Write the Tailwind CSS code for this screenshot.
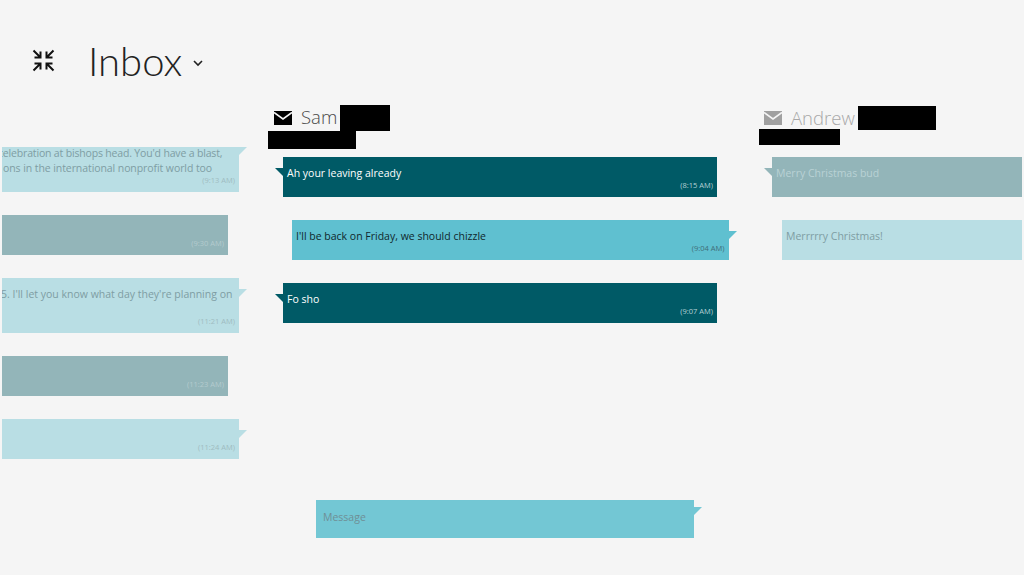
<!DOCTYPE html>
<html lang="en">
<head>
  <meta charset="UTF-8" />
  <title>Inbox</title>
  <script src="https://cdn.jsdelivr.net/npm/@tailwindcss/browser@4"></script>
</head>
<body class="bg-[#f5f5f5] font-['Open_Sans','Noto_Sans',sans-serif]">
<div class="w-[1024px] h-[575px] overflow-hidden bg-[#f5f5f5]">

  <!-- Header -->
  <header class="h-[105px] flex items-start pt-[37px] pl-[32px]">
    <svg class="w-[23px] h-[23px] mt-[12px]" viewBox="0 0 23 23" fill="none" stroke="#111" stroke-width="2">
      <path d="M1.5 1.5L8 8M8.5 2.5v6H2.5M21.5 1.5L15 8M14.5 2.5v6h6M1.5 21.5L8 15M8.5 20.5v-6H2.5M21.5 21.5L15 15M14.5 20.5v-6h6" />
    </svg>
    <h1 class="ml-[33px] -mt-[1px] font-['Lato',sans-serif] text-[40px] leading-[50px] font-light text-[#222]">Inbox</h1>
    <svg class="w-[10px] h-[7px] ml-[11px] mt-[23px]" viewBox="0 0 10 7" fill="none" stroke="#222" stroke-width="1.6">
      <path d="M1 1l4 4 4-4" />
    </svg>
  </header>

  <main class="h-[395px] flex items-start">
    <!-- Left conversation -->
    <section class="w-[246px] ml-[2px] pt-[42px] flex flex-col gap-[23px]">
      <div class="relative w-[237px] h-[45px] bg-[#b9dee4]">
        <div class="overflow-hidden h-[45px] text-[10.5px] leading-[14.5px] text-[#7e9da3] whitespace-nowrap">
          <p class="-ml-[4px] -mt-[1px] tracking-[-0.17px]">celebration at bishops head. You'd have a blast,</p>
          <p class="ml-[1px] tracking-[-0.08px]">ons in the international nonprofit world too</p>
        </div>
        <span class="absolute right-[4px] bottom-[7px] text-[7.5px] leading-[10px] text-[#9fbcc1]">(9:13 AM)</span>
        <svg class="absolute left-full top-0 w-[8px] h-[8px]" viewBox="0 0 8 8" fill="#b9dee4"><path d="M0 0h8L0 8z" /></svg>
      </div>
      <div class="relative w-[226px] h-[40px] bg-[#93b5b9]">
        <span class="absolute right-[4px] bottom-[7px] text-[7.5px] leading-[10px] text-[#b3cbce]">(9:30 AM)</span>
      </div>
      <div class="relative w-[237px] h-[55px] bg-[#b9dee4]">
        <div class="overflow-hidden pt-[8px] text-[10.5px] leading-[16px] text-[#7e9da3] whitespace-nowrap">
          <p class="-ml-[1px]">5. I'll let you know what day they're planning on</p>
        </div>
        <span class="absolute right-[4px] bottom-[7px] text-[7.5px] leading-[10px] text-[#9fbcc1]">(11:21 AM)</span>
        <svg class="absolute left-full top-[11px] w-[8px] h-[8px]" viewBox="0 0 8 8" fill="#b9dee4"><path d="M0 0h8L0 8z" /></svg>
      </div>
      <div class="relative w-[226px] h-[40px] bg-[#93b5b9]">
        <span class="absolute right-[4px] bottom-[7px] text-[7.5px] leading-[10px] text-[#b3cbce]">(11:23 AM)</span>
      </div>
      <div class="relative w-[237px] h-[40px] bg-[#b9dee4]">
        <span class="absolute right-[4px] bottom-[7px] text-[7.5px] leading-[10px] text-[#9fbcc1]">(11:24 AM)</span>
        <svg class="absolute left-full top-[11px] w-[8px] h-[8px]" viewBox="0 0 8 8" fill="#b9dee4"><path d="M0 0h8L0 8z" /></svg>
      </div>
    </section>

    <!-- Sam -->
    <section class="w-[468px] ml-[20px]">
      <div class="h-[52px]">
        <div class="flex items-start h-[26px]">
          <svg class="w-[18px] h-[14px] ml-[6px] mt-[6px]" viewBox="0 0 18 14">
            <path fill="#000" d="M0 0h18v14H0z" />
            <path fill="none" stroke="#f5f5f5" stroke-width="1.6" d="M0 1.5l9 6.5 9-6.5" />
          </svg>
          <span class="ml-[9px] w-[39px] text-[18.5px] leading-[24px] font-light text-[#4a4a4a]">Sam</span>
          <div class="w-[50px] h-[26px] bg-black"></div>
        </div>
        <div class="w-[88px] h-[18px] bg-black"></div>
      </div>
      <div class="flex flex-col gap-[23px]">
        <div class="relative ml-[15px] w-[434px] h-[40px] bg-[#005a66] text-white">
          <p class="pl-[4px] pt-[8px] text-[10.5px] leading-[16px]">Ah your leaving already</p>
          <span class="absolute right-[4px] bottom-[7px] text-[7.5px] leading-[10px] text-[#b5d0d4]">(8:15 AM)</span>
          <svg class="absolute right-full top-[11px] w-[8px] h-[8px]" viewBox="0 0 8 8" fill="#005a66"><path d="M0 0h8v8z" /></svg>
        </div>
        <div class="relative ml-[24px] w-[436.5px] h-[40px] bg-[#5fc0d0] text-[#10282c]">
          <p class="pl-[4px] pt-[8px] text-[10.5px] leading-[16px]">I'll be back on Friday, we should chizzle</p>
          <span class="absolute right-[4px] bottom-[7px] text-[7.5px] leading-[10px] text-[#3f6f78]">(9:04 AM)</span>
          <svg class="absolute left-full top-[11px] w-[8px] h-[8px]" viewBox="0 0 8 8" fill="#5fc0d0"><path d="M0 0h8L0 8z" /></svg>
        </div>
        <div class="relative ml-[15px] w-[434px] h-[40px] bg-[#005a66] text-white">
          <p class="pl-[4px] pt-[8px] text-[10.5px] leading-[16px]">Fo sho</p>
          <span class="absolute right-[4px] bottom-[7px] text-[7.5px] leading-[10px] text-[#b5d0d4]">(9:07 AM)</span>
          <svg class="absolute right-full top-[11px] w-[8px] h-[8px]" viewBox="0 0 8 8" fill="#005a66"><path d="M0 0h8v8z" /></svg>
        </div>
      </div>
    </section>

    <!-- Andrew -->
    <section class="w-[265px] ml-[23px]">
      <div class="h-[52px] pt-[1px]">
        <div class="flex items-start h-[23px]">
          <svg class="w-[18px] h-[14px] ml-[5px] mt-[5px]" viewBox="0 0 18 14">
            <path fill="#a0a0a0" d="M0 0h18v14H0z" />
            <path fill="none" stroke="#f5f5f5" stroke-width="1.6" d="M0 1.5l9 6.5 9-6.5" />
          </svg>
          <span class="ml-[9px] w-[67px] text-[18.5px] leading-[23px] font-light text-[#a8a8a8]">Andrew</span>
          <div class="w-[78px] h-[24px] bg-black"></div>
        </div>
        <div class="w-[81px] h-[16px] bg-black"></div>
      </div>
      <div class="flex flex-col gap-[23px]">
        <div class="relative ml-[13px] w-[250px] h-[40px] bg-[#93b5b9] text-[#b9d2d5]">
          <p class="pl-[4px] pt-[8px] text-[10.5px] leading-[16px]">Merry Christmas bud</p>
          <svg class="absolute right-full top-[11px] w-[8px] h-[8px]" viewBox="0 0 8 8" fill="#93b5b9"><path d="M0 0h8v8z" /></svg>
        </div>
        <div class="ml-[23px] w-[240px] h-[40px] bg-[#b9dee4] text-[#7e9da3]">
          <p class="pl-[4px] pt-[8px] text-[10.5px] leading-[16px]">Merrrrry Christmas!</p>
        </div>
      </div>
    </section>
  </main>

  <!-- Composer -->
  <div class="relative ml-[316px] w-[378px] h-[38px] bg-[#73c7d4]">
    <p class="pl-[7px] pt-[9px] text-[10.5px] leading-[16px] text-[#6f8f96]">Message</p>
    <svg class="absolute left-full top-[7px] w-[8px] h-[8px]" viewBox="0 0 8 8" fill="#73c7d4"><path d="M0 0h8L0 8z" /></svg>
  </div>
</div>
</body>
</html>
